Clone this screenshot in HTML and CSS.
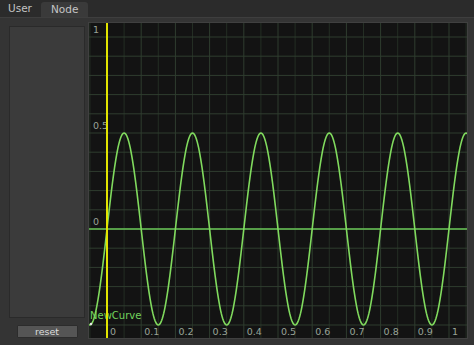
FILE: index.html
```html
<!DOCTYPE html>
<html lang="en">
<head>
  <meta charset="UTF-8">
  <title>Curve Editor</title>
  <link rel="stylesheet" href="styles.css">
</head>
<body>
  <div class="tabs">
    <div class="tab">User</div>
    <div class="tab active">Node</div>
  </div>

  <div class="main">
    <div class="side">
      <div class="panel"></div>
      <button class="reset">reset</button>
    </div>
    <div class="graph">
      <svg id="curve" viewBox="0 0 378 315" width="378" height="315"></svg>
    </div>
  </div>

  <script>
    const svg = document.getElementById('curve');
    const W = 378, H = 315;
    const X0 = 18, SX = 342, Y0 = 206, SY = 192;
    let out = '';

    // grid
    for (let k = -1; k <= 21; k++) {
      const x = X0 + SX * k * 0.05;
      const cls = k % 2 === 0 ? 'grid major' : 'grid';
      out += `<line class="${cls}" x1="${x}" y1="0" x2="${x}" y2="${H}"/>`;
    }
    for (let k = -5; k <= 10; k++) {
      const y = Y0 - SY * k * 0.1;
      out += `<line class="grid major" x1="0" y1="${y}" x2="${W}" y2="${y}"/>`;
    }

    // labels
    [[1, '1'], [0.5, '0.5'], [0, '0']].forEach(([v, t]) => {
      out += `<text class="lbl" x="4" y="${Y0 - SY * v - 4}">${t}</text>`;
    });
    for (let k = 0; k <= 10; k++) {
      const t = k === 0 ? '0' : k === 10 ? '1' : '0.' + k;
      out += `<text class="lbl" x="${X0 + SX * k * 0.1 + 3}" y="312">${t}</text>`;
    }

    out += `<line class="zero" x1="0" y1="${Y0}" x2="${W}" y2="${Y0}"/>`;

    // curve
    let d = '';
    for (let u = -0.06; u <= 1.06; u += 0.002) {
      const x = X0 + SX * u;
      const y = Y0 - SY * 0.5 * Math.sin(10 * Math.PI * u);
      d += (d ? 'L' : 'M') + x.toFixed(2) + ' ' + y.toFixed(2);
    }
    out += `<path class="line" d="${d}"/>`;
    out += `<text class="name" x="1" y="296">NewCurve</text>`;
    out += `<circle cx="2" cy="301" r="1.2" fill="#e8e8e8"/>`;
    out += `<line class="cursor" x1="${X0}" y1="0" x2="${X0}" y2="${H}"/>`;

    svg.innerHTML = out;
  </script>
</body>
</html>
```

FILE: styles.css
```css
body {
  margin: 0;
  background-color: #343434;
  font-family: "DejaVu Sans", Verdana, sans-serif;
  color: #c8c8c8;
  width: 474px;
  height: 345px;
  overflow: hidden;
}

.tabs {
  display: flex;
  height: 17px;
  background-color: #2b2b2b;
  border-bottom: 1px solid #3e3e3e;
  padding-left: 1px;
}

.tab {
  font-size: 10.5px;
  line-height: 17px;
  padding: 0 8px 0 7px;
  color: #c4c4c4;
}

.tab.active {
  margin-top: 2px;
  line-height: 15px;
  padding: 0 10px;
  background-color: #3a3a3a;
  border-radius: 3px 3px 0 0;
  margin-left: 1px;
}

.main {
  display: flex;
  gap: 4px;
  padding: 5px 7px 0 9px;
}

.side {
  width: 76px;
  display: flex;
  flex-direction: column;
  align-items: center;
  padding-top: 3px;
}

.panel {
  width: 100%;
  height: 292px;
  box-sizing: border-box;
  background-color: #3b3b3b;
  border: 1px solid #2a2a2a;
}

.reset {
  margin-top: 7px;
  width: 61px;
  height: 13px;
  padding: 0;
  border: 1px solid #2c2c2c;
  border-radius: 1px;
  background-color: #555555;
  color: #dcdcdc;
  font-family: "DejaVu Sans", Verdana, sans-serif;
  font-size: 9.5px;
  line-height: 11px;
}

.graph {
  width: 378px;
  height: 315px;
  background-color: #131313;
  outline: 1px solid #404040;
}

.graph svg {
  display: block;
}

.grid {
  stroke: #242e24;
  stroke-width: 1;
}

.grid.major {
  stroke: #2f3d2f;
}

.lbl {
  fill: #98a398;
  font-family: "DejaVu Sans", Verdana, sans-serif;
  font-size: 9.5px;
}

.zero {
  stroke: #68c656;
  stroke-width: 1.5;
}

.line {
  fill: none;
  stroke: #80da5e;
  stroke-width: 1.6;
}

.name {
  fill: #72d45c;
  font-family: "DejaVu Sans", Verdana, sans-serif;
  font-size: 10px;
}

.cursor {
  stroke: #e2e400;
  stroke-width: 2;
}
```
